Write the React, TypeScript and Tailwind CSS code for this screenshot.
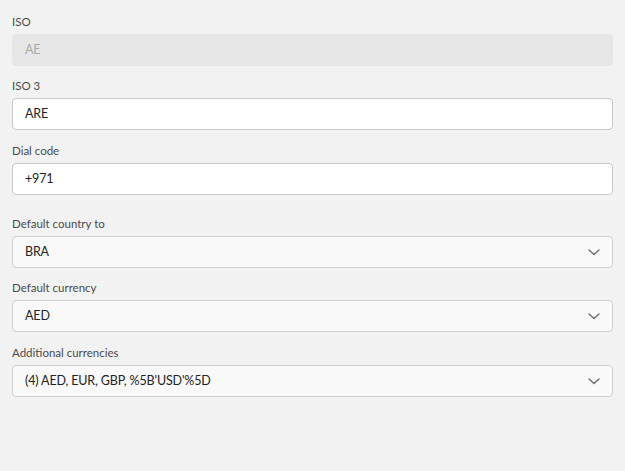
import React from "react";

const font = { fontFamily: "Lato, 'Open Sans', sans-serif" };

function Label({ children }: { children: React.ReactNode }) {
  return (
    <div className="h-4 mb-1 text-[11.5px] leading-4 text-[#4a4a4a]">{children}</div>
  );
}

function Chevron() {
  return (
    <svg width="12" height="7" viewBox="0 0 12 7" fill="none" className="shrink-0">
      <path d="M1 1l5 4.5L11 1" stroke="#6b6b6b" strokeWidth="1.4" strokeLinecap="round" strokeLinejoin="round" />
    </svg>
  );
}

function Field({ label, value, kind, className = "" }: { label: string; value: string; kind: "disabled" | "input" | "select"; className?: string }) {
  let box = "";
  if (kind === "disabled") box = "bg-[#e6e6e6] border border-[#e6e6e6] text-[#a8a8a8]";
  if (kind === "input") box = "bg-white border border-[#c8c8c8] text-[#222]";
  if (kind === "select") box = "bg-[#f9f9f9] border border-[#cfcfcf] text-[#222]";
  return (
    <div className={className}>
      <Label>{label}</Label>
      <div className={`h-8 rounded-[4px] flex items-center justify-between pl-3 pr-[12px] text-[12.5px] tracking-[-0.15px] ${box}`}>
        <span>{value}</span>
        {kind === "select" && <Chevron />}
      </div>
    </div>
  );
}

export default function App() {
  return (
    <div className="w-[625px] h-[471px] bg-[#f2f2f2] px-3 pt-[14px]" style={font}>
      <div className="flex flex-col gap-3">
        <Field label="ISO" value="AE" kind="disabled" />
        <Field label="ISO 3" value="ARE" kind="input" />
        <Field label="Dial code" value="+971" kind="input" className="mt-[1px]" />
        <Field label="Default country to" value="BRA" kind="select" className="mt-[9px]" />
        <Field label="Default currency" value="AED" kind="select" />
        <Field label="Additional currencies" value="(4) AED, EUR, GBP, %5B'USD'%5D" kind="select" className="mt-[1px]" />
      </div>
    </div>
  );
}
